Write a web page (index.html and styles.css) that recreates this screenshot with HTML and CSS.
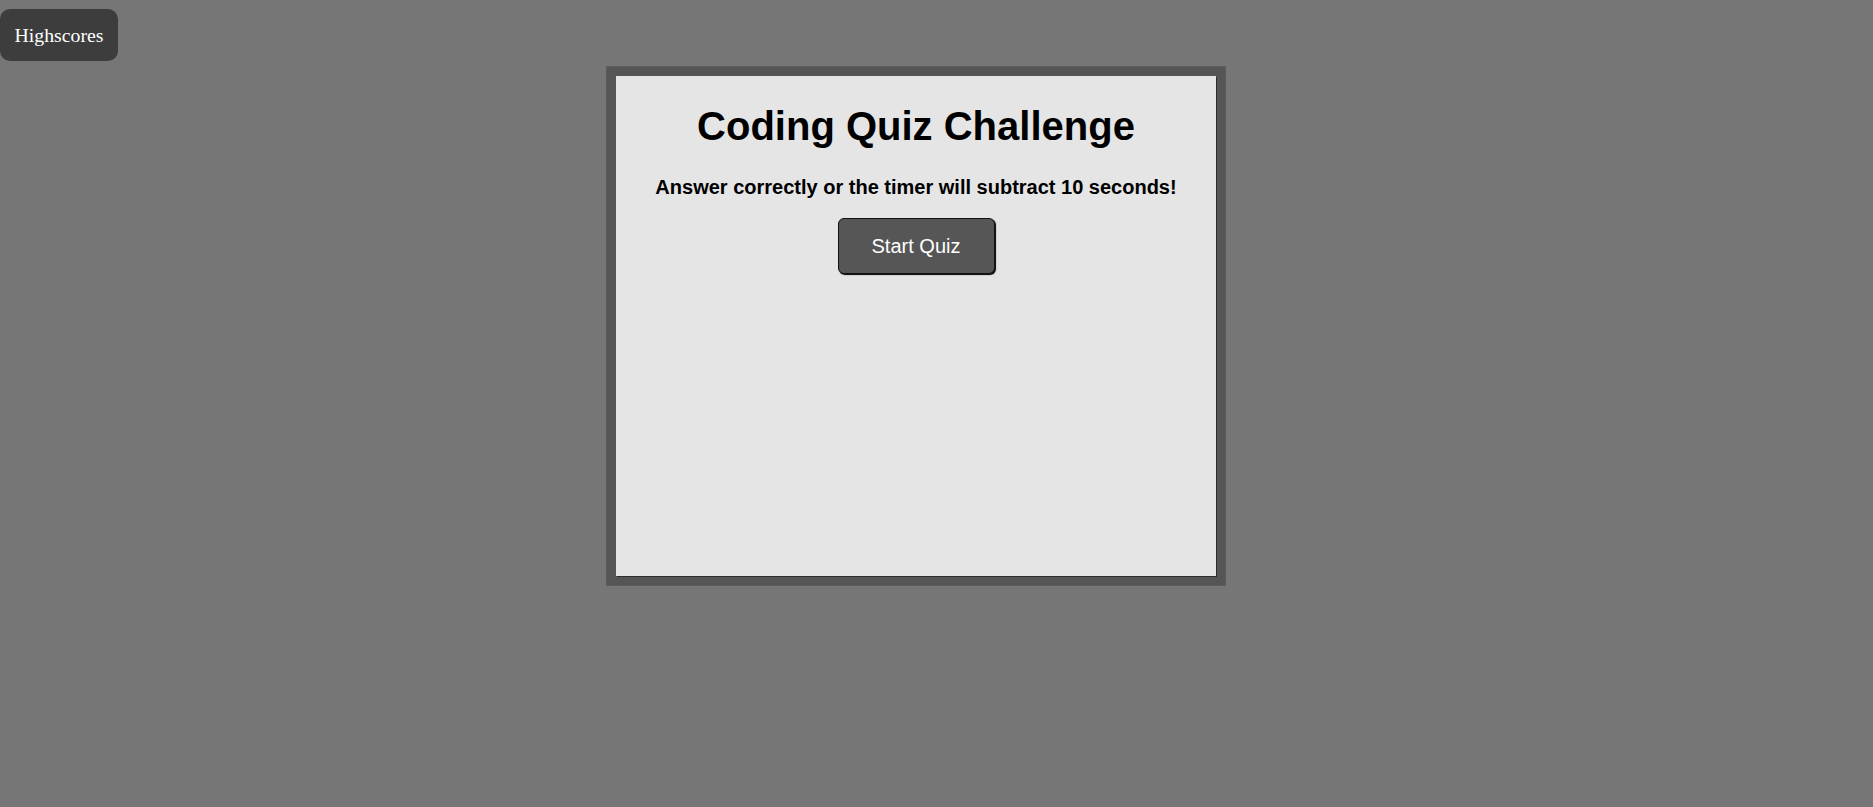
FILE: index.html
```html
<!DOCTYPE html>
<html lang="en">
<head>
<meta charset="utf-8">
<title>Coding Quiz Challenge</title>
<link rel="stylesheet" href="styles.css">
</head>
<body>
  <header class="top-bar">
    <a class="highscores-link" href="#">Highscores</a>
  </header>
  <main class="quiz-frame">
    <section class="quiz-panel">
      <h1 class="quiz-title">Coding Quiz Challenge</h1>
      <p class="quiz-intro">Answer correctly or the timer will subtract 10 seconds!</p>
      <button class="start-button" type="button">Start Quiz</button>
    </section>
  </main>
</body>
</html>
```
FILE: styles.css
```css
html, body {
  margin: 0;
  padding: 0;
}

body {
  background: #767676;
  padding-top: 9px;
  font-family: "Liberation Sans", Arial, sans-serif;
}

.top-bar {
  display: flex;
}

.highscores-link {
  display: flex;
  align-items: center;
  justify-content: center;
  height: 52px;
  width: 118px;
  box-sizing: border-box;
  background: #3d3d3d;
  color: #ffffff;
  border-radius: 10px;
  font-family: "Liberation Serif", "Times New Roman", serif;
  font-size: 19.8px;
  text-decoration: none;
}

.quiz-frame {
  display: block;
  width: 600px;
  margin: 5px 0 0 606px;
  padding: 10px;
  background: #555555;
  box-shadow: 0 0 0 1px #5c5c5c inset;
}

.quiz-panel {
  height: 500px;
  box-sizing: border-box;
  background: #e5e5e5;
  box-shadow: 1px 1px 0 #2e2e2e;
  padding-top: 27px;
  display: flex;
  flex-direction: column;
  align-items: center;
  text-align: center;
}

.quiz-title {
  margin: 0;
  font-size: 40px;
  line-height: 47px;
  font-weight: bold;
  color: #000000;
}

.quiz-intro {
  margin: 26px 0 0;
  font-size: 20px;
  line-height: 23px;
  font-weight: bold;
  color: #000000;
}

.start-button {
  margin-top: 19px;
  width: 157px;
  height: 56px;
  background: #565656;
  color: #ffffff;
  border: 1px solid #111111;
  border-radius: 6px;
  box-shadow: 1px 1px 1px #000000;
  font-family: "Liberation Sans", Arial, sans-serif;
  font-size: 20px;
  padding: 0;
  cursor: pointer;
}
```
